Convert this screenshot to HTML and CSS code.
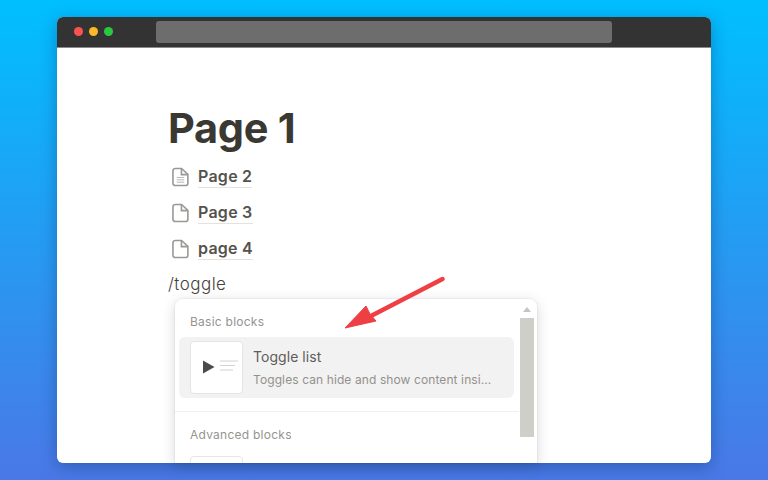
FILE: index.html
```html
<!DOCTYPE html>
<html lang="en">
<head>
<meta charset="utf-8">
<title>Page 1</title>
<link rel="stylesheet" href="styles.css">
</head>
<body>
<div class="window">
  <div class="titlebar">
    <div class="dots"><span class="dot red"></span><span class="dot yellow"></span><span class="dot green"></span></div>
    <div class="address"></div>
  </div>
  <main class="page">
    <h1 class="title">Page 1</h1>
    <a class="link-row">
      <svg class="page-icon" viewBox="0 0 18 20" fill="none" stroke="#9a9996" stroke-width="1.700"><path d="M3.5 1h6.600L16.800 7.200V16.500a2.500 2.500 0 0 1-2.500 2.500H3.500A2.500 2.500 0 0 1 1 16.500V3.500A2.500 2.500 0 0 1 3.500 1Z"/><path d="M10 1.200V7.500H16.600"/><path d="M5 10.500h8M5 13h8M5 15.500h8" stroke-width="1" stroke="#b5b4b1"/></svg>
      <span class="link-text">Page 2</span>
    </a>
    <a class="link-row">
      <svg class="page-icon" viewBox="0 0 18 20" fill="none" stroke="#9a9996" stroke-width="1.700"><path d="M3.5 1h6.600L16.800 7.200V16.500a2.500 2.500 0 0 1-2.500 2.500H3.500A2.500 2.500 0 0 1 1 16.500V3.500A2.500 2.500 0 0 1 3.500 1Z"/><path d="M10 1.200V7.500H16.600"/></svg>
      <span class="link-text">Page 3</span>
    </a>
    <a class="link-row">
      <svg class="page-icon" viewBox="0 0 18 20" fill="none" stroke="#9a9996" stroke-width="1.700"><path d="M3.5 1h6.600L16.800 7.200V16.500a2.500 2.500 0 0 1-2.500 2.500H3.500A2.500 2.500 0 0 1 1 16.500V3.500A2.500 2.500 0 0 1 3.500 1Z"/><path d="M10 1.200V7.500H16.600"/></svg>
      <span class="link-text">page 4</span>
    </a>
    <p class="command">/toggle</p>
  </main>
  <section class="menu">
    <div class="menu-scroll">
      <h2 class="menu-heading">Basic blocks</h2>
      <div class="menu-item selected">
        <div class="thumb">
          <svg class="thumb-icon" viewBox="0 0 36 16"><path d="M1 1.500 12.500 8 1 14.500Z" fill="#4a4a48"/><path d="M18 2H36M18 6.500H33M18 11H31" stroke="#d2d2cf" stroke-width="1"/></svg>
        </div>
        <div class="item-text">
          <div class="item-name">Toggle list</div>
          <div class="item-desc">Toggles can hide and show content insi...</div>
        </div>
      </div>
      <div class="divider"></div>
      <h2 class="menu-heading second">Advanced blocks</h2>
      <div class="thumb next"></div>
    </div>
    <div class="scrollbar">
      <span class="arrow-up"></span>
      <span class="thumb-bar"></span>
    </div>
  </section>
  <svg class="annotation" viewBox="0 0 110 60"><path d="M101.500 2 28 40" stroke="#ee3f44" stroke-width="4.500" stroke-linecap="round"/><path d="M4 51 25 29 29 37 35 44Z" fill="#ee3f44" stroke="#ee3f44" stroke-width="1" stroke-linejoin="round"/></svg>
</div>
</body>
</html>
```
FILE: styles.css
```css
* { box-sizing: border-box; }
html, body { height: 100%; }
body {
  margin: 0;
  height: 480px;
  padding: 17px 57px;
  overflow: hidden;
  background: linear-gradient(180deg, #00bfff 0%, #4a78e6 100%);
  font-family: "Inter", "Lato", sans-serif;
}
.window {
  position: relative;
  width: 654px;
  height: 446px;
  background: #fff;
  border-radius: 6px;
  box-shadow: 0 4px 16px rgba(0, 40, 90, .35);
}
.titlebar {
  height: 31px;
  display: flex;
  align-items: center;
  background: #333334;
  border-bottom: 1px solid #8a8a8a;
  border-radius: 6px 6px 0 0;
  padding: 0 99px 1px 17px;
}
.dots { display: flex; gap: 6px; width: 82px; }
.dot { width: 9px; height: 9px; border-radius: 50%; }
.red { background: #fb5350; }
.yellow { background: #fdb827; }
.green { background: #2ac83f; }
.address { flex: 1; height: 22px; border-radius: 3px; background: #6d6d6d; }
.page { padding: 51px 0 0 111px; color: #37352f; }
.title {
  margin: 0;
  font-size: 41.500px;
  line-height: 58px;
  font-weight: 700;
  letter-spacing: -.3px;
  color: #3a3833;
}
.link-row {
  display: flex;
  align-items: center;
  gap: 9px;
  height: 36px;
  padding-left: 4px;
}
.link-row:first-of-type { margin-top: 2px; }
.page-icon { width: 17px; height: 20px; flex: none; margin-top: -1px; }
.link-text {
  font-size: 16px;
  line-height: 21px;
  font-weight: 600;
  letter-spacing: .25px;
  color: #55524c;
  border-bottom: 1px solid #e3e2e0;
}
.command { margin: 5px 0 0; font-size: 17px; line-height: 24px; letter-spacing: .45px; font-weight: 300; color: #44423d; }
.menu {
  position: absolute;
  left: 118px;
  top: 282px;
  width: 362px;
  height: 164px;
  background: #fff;
  border-radius: 8px 8px 0 0;
  box-shadow: 0 0 0 1px rgba(15, 15, 15, .04), 0 3px 14px rgba(15, 15, 15, .16);
  display: flex;
  overflow: hidden;
}
.menu-scroll { width: 344px; padding-top: 15px; flex: none; }
.menu-heading {
  margin: 0;
  padding-left: 15px;
  font-size: 12px;
  line-height: 15px;
  font-weight: 400;
  letter-spacing: .25px;
  color: #959490;
}
.menu-item {
  display: flex;
  align-items: center;
  gap: 10px;
  height: 61px;
  margin: 8px 5px 0 4px;
  padding-left: 11px;
  background: #f2f2f2;
  border-radius: 6px;
}
.thumb {
  width: 53px;
  height: 53px;
  flex: none;
  display: flex;
  align-items: center;
  justify-content: center;
  background: #fff;
  border: 1px solid #e5e5e3;
  border-radius: 4px;
}
.thumb-icon { width: 36px; height: 16px; margin: -2px 0 0 6px; }
.item-name { font-size: 14px; line-height: 20px; letter-spacing: .05px; color: #5f5d58; margin-top: -2px; }
.item-desc { margin-top: 5px; font-size: 12px; line-height: 15px; letter-spacing: .1px; color: #92918d; white-space: nowrap; }
.divider { height: 1px; margin-top: 13px; background: #f0f0ef; }
.second { margin-top: 15px; }
.next { margin: 14px 0 0 15px; }
.scrollbar { flex: 1; display: flex; flex-direction: column; align-items: center; padding: 8px 2px 0 0; }
.arrow-up { width: 0; height: 0; border: 4px solid transparent; border-top: 0; border-bottom: 5px solid #c4c4c0; }
.thumb-bar { width: 14px; height: 119px; margin-top: 6px; background: #cfcfca; }
.annotation { position: absolute; left: 284px; top: 260px; width: 110px; height: 60px; overflow: visible; }
```
